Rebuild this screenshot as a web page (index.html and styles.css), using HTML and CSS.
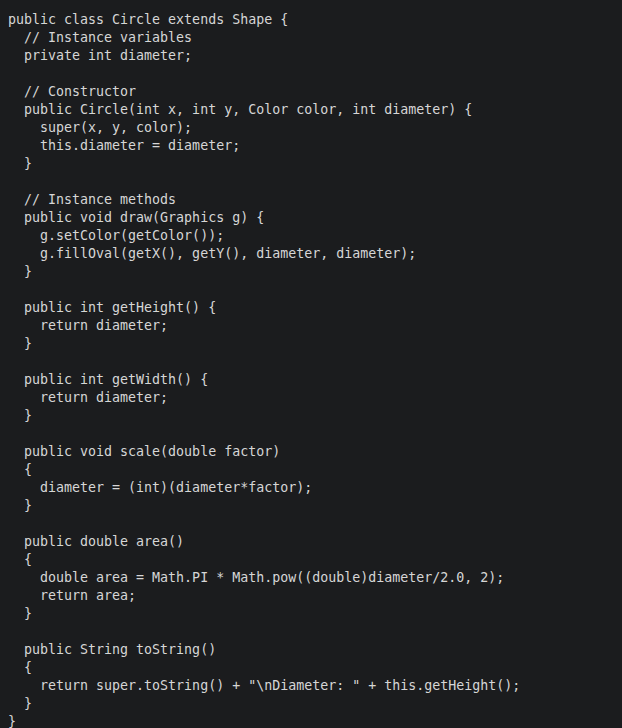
FILE: index.html
```html
<!DOCTYPE html>
<html>
<head>
<meta charset="utf-8">
<link rel="stylesheet" href="styles.css">
</head>
<body>
<pre class="code">public class Circle extends Shape {
  // Instance variables
  private int diameter;

  // Constructor
  public Circle(int x, int y, Color color, int diameter) {
    super(x, y, color);
    this.diameter = diameter;
  }

  // Instance methods
  public void draw(Graphics g) {
    g.setColor(getColor());
    g.fillOval(getX(), getY(), diameter, diameter);
  }

  public int getHeight() {
    return diameter;
  }

  public int getWidth() {
    return diameter;
  }

  public void scale(double factor)
  {
    diameter = (int)(diameter*factor);
  }

  public double area()
  {
    double area = Math.PI * Math.pow((double)diameter/2.0, 2);
    return area;
  }

  public String toString()
  {
    return super.toString() + "\nDiameter: " + this.getHeight();
  }
}</pre>
</body>
</html>
```
FILE: styles.css
```css
html, body {
  margin: 0;
  padding: 0;
  background: #1b1c1e;
}
.code {
  margin: 0;
  padding: 11px 8px 0;
  font-family: "DejaVu Sans Mono", "Liberation Mono", monospace;
  font-size: 13.3px;
  line-height: 18px;
  color: #d6d6d6;
  background: #1b1c1e;
  white-space: pre;
}
```
